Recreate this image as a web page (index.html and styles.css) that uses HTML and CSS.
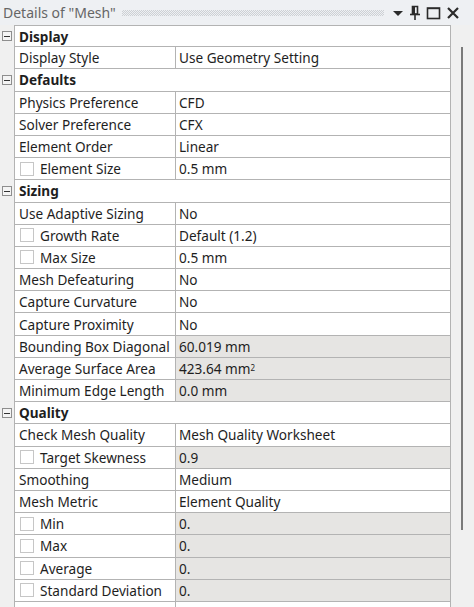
FILE: index.html
```html
<!DOCTYPE html>
<html>
<head>
<meta charset="utf-8">
<link rel="stylesheet" href="styles.css">
</head>
<body>
<div class="panel">
  <div class="titlebar">
    <span class="title">Details of "Mesh"</span>
    <span class="grip"></span>
    <span class="tools">
      <svg class="ico" width="12" height="14" viewBox="0 0 12 14"><path d="M1 5 L11 5 L6 10 Z" fill="#2b2b2b"/></svg>
      <svg class="ico" width="12" height="16" viewBox="0 0 12 16"><path d="M3.5 1.5 H8.5 V9 H3.5 Z" fill="none" stroke="#2b2b2b" stroke-width="1.6"/><path d="M5 2 V9" stroke="#2b2b2b" stroke-width="2"/><path d="M1 9.5 H11" stroke="#2b2b2b" stroke-width="1.6"/><path d="M6 10 V15" stroke="#2b2b2b" stroke-width="1.6"/></svg>
      <svg class="ico" width="15" height="14" viewBox="0 0 15 14"><rect x="1.5" y="2" width="12" height="10.5" fill="none" stroke="#2b2b2b" stroke-width="1.6"/><path d="M1.5 2.6 H13.5" stroke="#2b2b2b" stroke-width="1.2"/></svg>
      <svg class="ico" width="14" height="14" viewBox="0 0 14 14"><path d="M2 2 L12 12 M12 2 L2 12" stroke="#2b2b2b" stroke-width="2.2"/></svg>
    </span>
  </div>
  <div class="body">
    <div class="grid">
      <div class="row head"><span class="gut"><i class="minus"></i></span><span class="hcell">Display</span></div>
      <div class="row"><span class="gut"></span><span class="lab">Display Style</span><span class="val">Use Geometry Setting</span></div>

      <div class="row head"><span class="gut"><i class="minus"></i></span><span class="hcell">Defaults</span></div>
      <div class="row"><span class="gut"></span><span class="lab">Physics Preference</span><span class="val">CFD</span></div>
      <div class="row"><span class="gut"></span><span class="lab">Solver Preference</span><span class="val">CFX</span></div>
      <div class="row"><span class="gut"></span><span class="lab">Element Order</span><span class="val">Linear</span></div>
      <div class="row"><span class="gut"></span><span class="lab"><i class="cb"></i>Element Size</span><span class="val">0.5 mm</span></div>

      <div class="row head"><span class="gut"><i class="minus"></i></span><span class="hcell">Sizing</span></div>
      <div class="row"><span class="gut"></span><span class="lab">Use Adaptive Sizing</span><span class="val">No</span></div>
      <div class="row"><span class="gut"></span><span class="lab"><i class="cb"></i>Growth Rate</span><span class="val">Default (1.2)</span></div>
      <div class="row"><span class="gut"></span><span class="lab"><i class="cb"></i>Max Size</span><span class="val">0.5 mm</span></div>
      <div class="row"><span class="gut"></span><span class="lab">Mesh Defeaturing</span><span class="val">No</span></div>
      <div class="row"><span class="gut"></span><span class="lab">Capture Curvature</span><span class="val">No</span></div>
      <div class="row"><span class="gut"></span><span class="lab">Capture Proximity</span><span class="val">No</span></div>
      <div class="row"><span class="gut"></span><span class="lab">Bounding Box Diagonal</span><span class="val ro">60.019 mm</span></div>
      <div class="row"><span class="gut"></span><span class="lab">Average Surface Area</span><span class="val ro">423.64 mm<sup>2</sup></span></div>
      <div class="row"><span class="gut"></span><span class="lab">Minimum Edge Length</span><span class="val ro">0.0 mm</span></div>

      <div class="row head"><span class="gut"><i class="minus"></i></span><span class="hcell">Quality</span></div>
      <div class="row"><span class="gut"></span><span class="lab">Check Mesh Quality</span><span class="val">Mesh Quality Worksheet</span></div>
      <div class="row"><span class="gut"></span><span class="lab"><i class="cb"></i>Target Skewness</span><span class="val ro">0.9</span></div>
      <div class="row"><span class="gut"></span><span class="lab">Smoothing</span><span class="val">Medium</span></div>
      <div class="row"><span class="gut"></span><span class="lab">Mesh Metric</span><span class="val">Element Quality</span></div>
      <div class="row"><span class="gut"></span><span class="lab"><i class="cb"></i>Min</span><span class="val ro">0.</span></div>
      <div class="row"><span class="gut"></span><span class="lab"><i class="cb"></i>Max</span><span class="val ro">0.</span></div>
      <div class="row"><span class="gut"></span><span class="lab"><i class="cb"></i>Average</span><span class="val ro">0.</span></div>
      <div class="row"><span class="gut"></span><span class="lab"><i class="cb"></i>Standard Deviation</span><span class="val ro">0.</span></div>
      <div class="row"><span class="gut"></span><span class="lab"></span><span class="val"></span></div>
    </div>
    <div class="scroll"><div class="thumb"></div></div>
  </div>
</div>
</body>
</html>
```

FILE: styles.css
```css
html, body {
  margin: 0;
  padding: 0;
  background: #f0f0f0;
}
body {
  width: 474px;
  height: 607px;
  overflow: hidden;
  font-family: "Noto Sans", "Open Sans", sans-serif;
  font-size: 13.6px;
  color: #1e1e1e;
}
.panel {
  display: flex;
  flex-direction: column;
  height: 607px;
}
.titlebar {
  height: 25px;
  flex: none;
  display: flex;
  align-items: center;
  background: #eef0f3;
  box-sizing: border-box;
  padding: 0 0 0 3px;
}
.title {
  color: #666;
  font-size: 14px;
  white-space: nowrap;
}
.grip {
  flex: 1;
  height: 6px;
  margin: 0 8px 0 6px;
  background: repeating-conic-gradient(#cdd0d4 0 25%, transparent 0 50%) 0 0 / 2px 2px;
}
.tools {
  display: flex;
  align-items: center;
  gap: 5px;
  padding-right: 14px;
}
.ico { display: block; }
.body {
  flex: 1;
  display: flex;
  overflow: hidden;
}
.grid {
  width: 451px;
  flex: none;
  display: flex;
  flex-direction: column;
}
.row {
  display: grid;
  grid-template-columns: 14px 162px 275px;
  height: 22.2px;
  flex: none;
}
.row:first-child .lab,
.row:first-child .val,
.row:first-child .hcell { border-top: 1px solid #b3b3b3; }
.gut {
  background: #f0f0f0;
  position: relative;
}
.lab, .val, .hcell {
  background: #fff;
  border-bottom: 1px solid #b3b3b3;
  display: flex;
  align-items: center;
  white-space: nowrap;
  overflow: hidden;
  box-sizing: border-box;
}
.lab {
  border-left: 1px solid #b3b3b3;
  border-right: 1px solid #b3b3b3;
  padding-left: 4px;
}
.val {
  border-right: 1px solid #b3b3b3;
  padding-left: 3px;
}
.val.ro { background: #e6e5e3; }
.hcell {
  grid-column: 2 / 4;
  border-left: 1px solid #b3b3b3;
  border-right: 1px solid #b3b3b3;
  padding-left: 4px;
  font-weight: bold;
}
.minus {
  position: absolute;
  left: 2px;
  top: 50%;
  margin-top: -5px;
  width: 10px;
  height: 10px;
  box-sizing: border-box;
  border: 1px solid #8e8e8e;
  background: #f4f4f4;
}
.minus::after {
  content: "";
  position: absolute;
  left: 1px;
  right: 1px;
  top: 3.5px;
  height: 1.2px;
  background: #333;
}
.cb {
  width: 14px;
  height: 14px;
  box-sizing: border-box;
  border: 1px solid #c6c6c6;
  background: #fff;
  margin: 0 6px 0 1px;
  flex: none;
}
sup {
  font-size: 8px;
  vertical-align: 6px;
  line-height: 0;
}
.scroll {
  flex: 1;
  background: #f0f0f0;
  position: relative;
}
.thumb {
  position: absolute;
  left: 10px;
  top: 22px;
  width: 2px;
  height: 483px;
  background: #7a7a7a;
}
```
